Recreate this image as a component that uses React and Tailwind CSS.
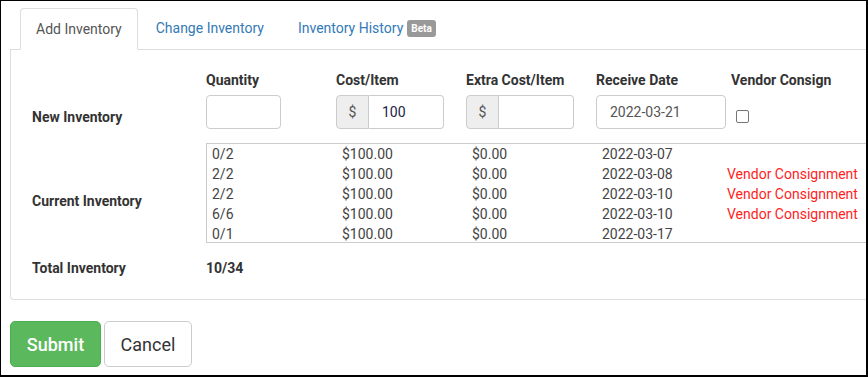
import React from 'react'

const rows = [
  { qty: '0/2', cost: '$100.00', extra: '$0.00', date: '2022-03-07', vendor: false },
  { qty: '2/2', cost: '$100.00', extra: '$0.00', date: '2022-03-08', vendor: true },
  { qty: '2/2', cost: '$100.00', extra: '$0.00', date: '2022-03-10', vendor: true },
  { qty: '6/6', cost: '$100.00', extra: '$0.00', date: '2022-03-10', vendor: true },
  { qty: '0/1', cost: '$100.00', extra: '$0.00', date: '2022-03-17', vendor: false },
]

function Header({ text }) {
  return <div className="h-[20px] leading-[20px] text-[14px] font-bold text-[#333] mb-[5px]">{text}</div>
}

function AddonInput({ value }) {
  return (
    <div className="flex h-[34px] w-[108px]">
      <span className="w-[33px] flex items-center justify-center bg-[#eee] border border-[#ccc] rounded-l-[4px] text-[14px] text-[#555]">$</span>
      <div className="flex-1 flex items-center pl-[13px] border border-l-0 border-[#ccc] rounded-r-[4px] text-[14px] text-[#222244]">{value}</div>
    </div>
  )
}

export default function App() {
  return (
    <div className="w-[868px] h-[377px] overflow-hidden bg-white border-l border-t border-r-2 border-b-2 border-black font-['Roboto',sans-serif] text-[#333]">
      <div className="pl-[9px] w-[1000px]">
        {/* tabs */}
        <div className="flex items-end pt-[7px] pl-[10px] border-b border-[#ddd] h-[49px]">
          <div className="h-[42px] -mb-px px-[15px] flex items-center bg-white border border-[#ddd] border-b-white rounded-t-[4px] text-[14px] text-[#555]">Add Inventory</div>
          <div className="h-[42px] ml-[3px] px-[15px] flex items-center text-[14px] text-[#337ab7]">Change Inventory</div>
          <div className="h-[42px] ml-[2px] px-[17px] flex items-center text-[14px] text-[#337ab7]">
            Inventory History
            <span className="ml-[4px] px-[4px] h-[17px] flex items-center rounded-[3px] bg-[#999] text-white text-[10px] font-bold">Beta</span>
          </div>
        </div>

        {/* panel */}
        <div className="border-l border-r border-b border-[#ddd] rounded-b-[4px] pl-[21px] pt-[20px] h-[250px]">
          <div className="flex">
            <div className="w-[174px] pt-[37px] leading-[20px] text-[14px] font-bold">New Inventory</div>
            <div className="w-[130px]">
              <Header text="Quantity" />
              <div className="h-[34px] w-[75px] border border-[#ccc] rounded-[4px]" />
            </div>
            <div className="w-[130px]">
              <Header text="Cost/Item" />
              <AddonInput value="100" />
            </div>
            <div className="w-[130px]">
              <Header text="Extra Cost/Item" />
              <AddonInput value="" />
            </div>
            <div className="w-[135px]">
              <Header text="Receive Date" />
              <div className="h-[34px] w-[130px] flex items-center pl-[13px] border border-[#ccc] rounded-[4px] text-[14px] text-[#555]">2022-03-21</div>
            </div>
            <div className="w-[130px]">
              <Header text="Vendor Consign" />
              <div className="pt-[15px] pl-[5px]">
                <div className="w-[13px] h-[13px] border border-[#767676] rounded-[2px] bg-white" />
              </div>
            </div>
          </div>

          <div className="flex mt-[14px]">
            <div className="w-[174px] flex items-center pt-[16px] leading-[20px] text-[14px] font-bold">Current Inventory</div>
            <div className="w-[700px] h-[100px] border border-[#ccc] pl-[5px] overflow-hidden">
              {rows.map((r, i) => (
                <div key={i} className="flex h-[20px] leading-[20px] text-[14px] text-[#444]">
                  <span className="w-[130px]">{r.qty}</span>
                  <span className="w-[130px]">{r.cost}</span>
                  <span className="w-[130px]">{r.extra}</span>
                  <span className="w-[125px]">{r.date}</span>
                  <span className="text-[#ff1e1e]">{r.vendor ? 'Vendor Consignment' : ''}</span>
                </div>
              ))}
            </div>
          </div>

          <div className="flex mt-[15px] text-[14px] font-bold leading-[20px]">
            <div className="w-[174px]">Total Inventory</div>
            <div>10/34</div>
          </div>
        </div>

        {/* buttons */}
        <div className="flex gap-[3px] mt-[21px]">
          <button className="w-[91px] h-[46px] rounded-[5px] bg-[#5cb85c] border border-[#4cae4c] text-white text-[18px] font-medium">Submit</button>
          <button className="w-[88px] h-[46px] rounded-[5px] bg-white border border-[#ccc] text-[#333] text-[18px]">Cancel</button>
        </div>
      </div>
    </div>
  )
}
